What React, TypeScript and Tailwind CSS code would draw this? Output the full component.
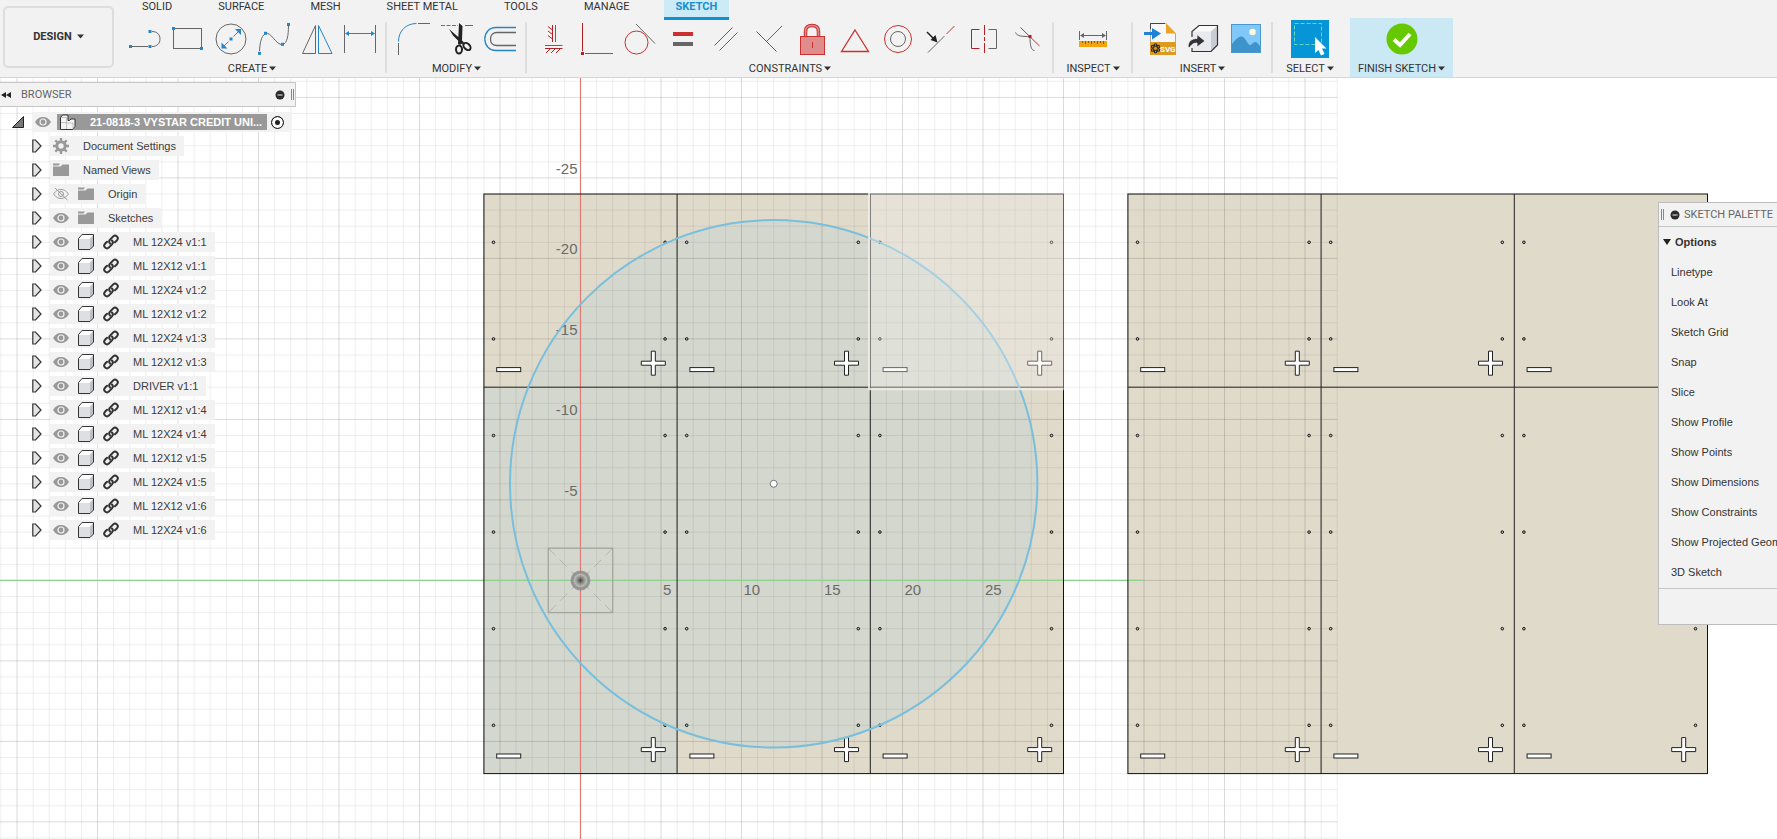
import type { ReactNode } from 'react';

const BLUE = '#2585c9';
const GRAY = '#666666';
const RED = '#c9302f';

// one grid unit in pixels, and the sketch origin inside the viewport
const UNIT = 16.1;
const ORIGIN_X = 580.5;
const ORIGIN_Y = 502.4;

const range = (from: number, to: number) =>
  Array.from({ length: to - from + 1 }, (_, i) => from + i);

interface Tool {
  name: string;
  icon: ReactNode;
}

interface ToolGroup {
  label: string;
  tools: Tool[];
}

function Dot({ x, y, color = BLUE }: { x: number; y: number; color?: string }) {
  return <rect x={x - 1.5} y={y - 1.5} width="3" height="3" fill={color} stroke="none" />;
}

const GROUPS: ToolGroup[] = [
  {
    label: 'CREATE',
    tools: [
      {
        name: 'Line',
        icon: (
          <>
            <path d="M3 23.5H19M23 8.5C28 8.5 31 11.5 31 16S28 23.5 23 23.5" stroke={GRAY} />
            <Dot x={1.5} y={23.5} />
            <Dot x={21} y={23.5} />
            <Dot x={21} y={8.5} />
          </>
        ),
      },
      {
        name: 'Rectangle',
        icon: (
          <>
            <rect x="1.5" y="5.5" width="28" height="20" stroke={GRAY} />
            <Dot x={1.5} y={5.5} />
            <Dot x={29.5} y={25.5} />
          </>
        ),
      },
      {
        name: 'Circle',
        icon: (
          <>
            <circle cx="16" cy="16" r="15" stroke={GRAY} />
            <path d="M8 24l5.5-5.5M18.5 13.5L24 8" stroke={BLUE} />
            <path d="M26 6v6l-6-6zM6.500 25.500v-6l6 6z" fill={BLUE} />
            <Dot x={16} y={16} />
          </>
        ),
      },
      {
        name: 'Spline',
        icon: (
          <>
            <path d="M1.500 28C2 20 3 13.500 7.300 10.500C13 8 18 22.500 24.500 21.500C29.500 20.500 30.300 12 30.500 3" stroke={GRAY} />
            <Dot x={1.5} y={30.3} />
            <Dot x={7.5} y={10.3} />
            <Dot x={24.5} y={21.3} />
            <Dot x={30.5} y={1.5} />
          </>
        ),
      },
      {
        name: 'Mirror',
        icon: (
          <>
            <path d="M14.500 2.500L1.500 30.500H14.500z" stroke={GRAY} />
            <path d="M17.500 2.500L31 30.500H17.500z" stroke={BLUE} />
          </>
        ),
      },
      {
        name: 'Sketch Dimension',
        icon: (
          <>
            <path d="M0.500 2V30M31.500 2V30" stroke={GRAY} />
            <path d="M3 10.500H29" stroke={BLUE} />
            <path d="M1 10.500l4-2.500v5zM31 10.500l-4-2.500v5z" fill={BLUE} />
          </>
        ),
      },
    ],
  },
  {
    label: 'MODIFY',
    tools: [
      {
        name: 'Fillet',
        icon: (
          <>
            <path d="M0.500 18.500C0.500 8 8 0.500 18.500 0.500" stroke={BLUE} />
            <path d="M0.500 20V32M20 0.500H32" stroke={GRAY} />
          </>
        ),
      },
      {
        name: 'Trim',
        icon: (
          <>
            <path d="M0 2.500H17" stroke={BLUE} strokeDasharray="4 1.5" />
            <path d="M24 2.500H32" stroke={GRAY} />
            <path d="M8 6l11 9.500 4 4-2 2-9-9zM18 0l3.500 3-0.500 14-1.500 5-2.500-1z" fill="#222" />
            <ellipse cx="18" cy="26.500" rx="3" ry="4" stroke="#222" strokeWidth="2" />
            <ellipse cx="26" cy="23.500" rx="2.800" ry="4.200" stroke="#222" strokeWidth="2" transform="rotate(-45 26 23.500)" />
          </>
        ),
      },
      {
        name: 'Offset',
        icon: (
          <>
            <path d="M32 4.500H12C5 4.500 0.800 10 0.800 16S5 27.500 12 27.500H32" stroke={BLUE} strokeWidth="1.300" />
            <path d="M32 9.500H13C9 9.500 6.500 12 6.500 16S9 22.500 13 22.500H32" stroke={GRAY} strokeWidth="1.300" />
          </>
        ),
      },
    ],
  },
  {
    label: 'CONSTRAINTS',
    tools: [
      {
        name: 'Horizontal/Vertical',
        icon: (
          <>
            <path d="M14.500 2V19M10 3.500l4.500 3.500M10 8l4.500 3.500M10 12.500l4.500 3.500M7 25.500H24.500M12 26l-4 4M17 26l-4 4M22 26l-4 4" stroke="#b32024" />
            <path d="M17.500 2V19M7 22.500H24.500" stroke={GRAY} />
          </>
        ),
      },
      {
        name: 'Coincident',
        icon: (
          <>
            <path d="M1.500 0V28" stroke="#b32024" />
            <path d="M4 30.500H32" stroke={GRAY} />
            <Dot x={1.5} y={30.5} color="#b32024" />
          </>
        ),
      },
      {
        name: 'Tangent',
        icon: (
          <>
            <circle cx="12.500" cy="19.500" r="11.500" stroke={RED} />
            <path d="M12 1l19 19.500" stroke={GRAY} />
          </>
        ),
      },
      {
        name: 'Equal',
        icon: (
          <>
            <path d="M6 9h20v4H6z" fill={RED} />
            <path d="M6 19h20v4H6z" fill={GRAY} />
          </>
        ),
      },
      {
        name: 'Parallel',
        icon: (
          <>
            <path d="M4.500 22.500L22.500 4.500" stroke={RED} />
            <path d="M9.500 27.500L27.500 9.500" stroke={GRAY} />
          </>
        ),
      },
      {
        name: 'Perpendicular',
        icon: (
          <>
            <path d="M3.500 8.500l20 20" stroke={RED} />
            <path d="M14 18L29 3" stroke={GRAY} />
          </>
        ),
      },
      {
        name: 'Fix/Unfix',
        icon: (
          <>
            <path d="M9.500 13V8.500C9.500 4.500 12 2.500 16 2.500S22.500 4.500 22.500 8.500V13" stroke={RED} strokeWidth="3.500" />
            <path d="M9.500 13V8.500C9.500 4.500 12 2.500 16 2.500S22.500 4.500 22.500 8.500V13" stroke="#e08c8c" strokeWidth="1.500" />
            <rect x="4.500" y="13.500" width="24" height="18" fill="#e08c8c" stroke={RED} />
            <path d="M16.500 19v6" stroke={RED} />
          </>
        ),
      },
      {
        name: 'Midpoint',
        icon: <path d="M16 7L29.500 28.500H2.500z" stroke={RED} strokeWidth="1.300" />,
      },
      {
        name: 'Concentric',
        icon: (
          <>
            <circle cx="16" cy="16" r="13.500" stroke={RED} />
            <circle cx="16" cy="16" r="7.500" stroke={GRAY} />
          </>
        ),
      },
      {
        name: 'Collinear',
        icon: (
          <>
            <path d="M3 29.500L19.500 13" stroke={GRAY} />
            <path d="M21.500 11L29.500 3" stroke={RED} />
            <path d="M2 9l7 7" stroke="#222" strokeWidth="1.500" />
            <path d="M12.500 19.500l-7-2.500 5-5z" fill="#222" />
          </>
        ),
      },
      {
        name: 'Symmetry',
        icon: (
          <>
            <path d="M11.500 6.500H3.500V25.500H11.500" stroke="#b32024" />
            <path d="M16.500 2v10M16.500 14v4M16.500 20v10" stroke="#b32024" />
            <path d="M20.500 6.500H28.500V25.500H20.500" stroke={GRAY} />
          </>
        ),
      },
      {
        name: 'Curvature',
        icon: (
          <>
            <path d="M4.500 9.500C6 13.500 12 13.500 19 13.500C19 22 20 27.500 23.500 27.500" stroke={GRAY} />
            <path d="M9.500 4.500l19 18.500" stroke={RED} />
            <Dot x={19} y={13.5} color="#b32024" />
          </>
        ),
      },
    ],
  },
  {
    label: 'INSPECT',
    tools: [
      {
        name: 'Measure',
        icon: (
          <>
            <path d="M2.500 8v9M29.500 8v9M5 12.500h22" stroke={GRAY} />
            <path d="M3 12.500l4-2.500v5zM29 12.500l-4-2.500v5z" fill={GRAY} />
            <path d="M2 18h28v6H2z" fill="#f5a30a" />
            <path d="M5.500 18v2M8.500 18v3M11.500 18v2M14.500 18v3M17.500 18v2M20.500 18v3M23.500 18v2M26.500 18v3" stroke="#8a5a00" />
          </>
        ),
      },
    ],
  },
  {
    label: 'INSERT',
    tools: [
      {
        name: 'Insert SVG',
        icon: (
          <>
            <path d="M6.500 0.500h15l10 10v21h-25z" fill="#f7f7f7" stroke="#aaa" />
            <path d="M6.500 6V0.500H21" stroke="#444" />
            <path d="M22 0l10 10.500H22z" fill="#eaa42b" />
            <path d="M6 19h26v13H6z" fill="#dc9a1f" />
            <path d="M0 9h8V5l9 5.500-9 6V12H0z" fill="#1c83d6" />
            <g stroke="#222" strokeWidth="1.100">
              <circle cx="11.500" cy="22" r="1.300" />
              <circle cx="11.500" cy="28.500" r="1.300" />
              <circle cx="8.700" cy="23.700" r="1.300" />
              <circle cx="14.300" cy="23.700" r="1.300" />
              <circle cx="8.700" cy="27" r="1.300" />
              <circle cx="14.300" cy="27" r="1.300" />
            </g>
            <text x="16" y="28.500" fill="#fff" fontFamily="Roboto, sans-serif" fontSize="8" fontWeight="700">SVG</text>
          </>
        ),
      },
      {
        name: 'Insert Derive',
        icon: (
          <>
            <path d="M5 8.500L12 2.500H30.500V22L24 28.500H5z" fill="#fafafa" />
            <path d="M24 8.500L30.500 2.500V22L24 28.500z" fill="#c9ccd2" />
            <path d="M5 8.500h19v20H5z" fill="#e9eaee" />
            <path d="M5 14V8.500L12 2.500H30.500V22L24 28.500H5V25" stroke="#333" strokeWidth="1.200" />
            <path d="M1 24C1 18 5 15.500 10 15.500V11.500l8 6.500-8 6v-4C6 20 4 22 3 24.500z" fill="#333" stroke="#f2f2f2" strokeWidth="0.800" />
          </>
        ),
      },
      {
        name: 'Canvas',
        icon: (
          <>
            <rect x="1.500" y="1.500" width="29" height="28" fill="#7fc8f8" stroke="#4a9ad0" />
            <path d="M2 21C7 15 9 13 12 13.500S18 22 20 22S23 19 25 19S28 21 30 23V29H2z" fill="#3f93cb" />
            <circle cx="22.500" cy="9" r="3.200" fill="#fffbe0" />
          </>
        ),
      },
    ],
  },
];

const TABS = ['SOLID', 'SURFACE', 'MESH', 'SHEET METAL', 'TOOLS', 'MANAGE', 'SKETCH'];

const COMPONENTS = [
  'ML 12X24 v1:1',
  'ML 12X12 v1:1',
  'ML 12X24 v1:2',
  'ML 12X12 v1:2',
  'ML 12X24 v1:3',
  'ML 12X12 v1:3',
  'DRIVER v1:1',
  'ML 12X12 v1:4',
  'ML 12X24 v1:4',
  'ML 12X12 v1:5',
  'ML 12X24 v1:5',
  'ML 12X12 v1:6',
  'ML 12X24 v1:6',
];

const PALETTE_OPTIONS = [
  'Linetype',
  'Look At',
  'Sketch Grid',
  'Snap',
  'Slice',
  'Show Profile',
  'Show Points',
  'Show Dimensions',
  'Show Constraints',
  'Show Projected Geom',
  '3D Sketch',
];

function Caret() {
  return (
    <svg className="mb-[2px] h-[5px] w-[7px]" viewBox="0 0 7 5">
      <path d="M0 0.500h7L3.500 4.500z" fill="#333" />
    </svg>
  );
}

function GroupLabel({ children }: { children: string }) {
  return (
    <button className="mx-auto mt-[3px] flex items-center gap-[2px] text-[11px] leading-4 whitespace-nowrap">
      {children}
      <Caret />
    </button>
  );
}

function Toolbar() {
  return (
    <header className="flex h-[78px] shrink-0 border-b border-[#d6d6d6] bg-[#f2f2f2] font-[Roboto,sans-serif] text-[#333]">
      <div className="w-[118px] shrink-0 pt-[6px] pl-[3px]">
        <button className="flex h-[62px] w-[111px] items-center justify-center gap-[5px] rounded-[5px] border-2 border-[#dddddd] text-[11px] font-bold">
          DESIGN
          <Caret />
        </button>
      </div>
      <div className="flex flex-col">
        <nav className="flex h-[18px] gap-[22px] pl-3">
          {TABS.map((tab) => (
            <button
              key={tab}
              className={
                tab === 'SKETCH'
                  ? 'h-[20px] border-b-[3px] border-[#1490cf] bg-[#cdeaf7] px-3 pb-[3px] text-[11px] leading-[14px] font-bold text-[#1490cf]'
                  : 'h-[20px] border-b-[3px] border-transparent px-3 pb-[3px] text-[11px] leading-[14px]'
              }
            >
              {tab}
            </button>
          ))}
        </nav>
        <div className="flex h-[59px]">
          {GROUPS.map((group) => (
            <div key={group.label} className="flex">
              <div className="flex min-w-[77px] flex-col pt-[2px] pr-1 pl-[5px]">
                <div className="flex h-[38px] justify-center">
                  {group.tools.map((tool) => (
                    <button key={tool.name} aria-label={tool.name} className="flex w-[43px] items-center justify-center">
                      <svg className="size-8 overflow-visible" viewBox="0 0 32 32" fill="none">
                        {tool.icon}
                      </svg>
                    </button>
                  ))}
                </div>
                <GroupLabel>{group.label}</GroupLabel>
              </div>
              <div className="mt-1 h-[51px] w-[2px] bg-[#dedede]" />
            </div>
          ))}
          <div className="flex w-[77px] flex-col pt-[2px] pr-[3px]">
            <button aria-label="Select" className="mx-auto size-[38px] bg-[#0696d7]">
              <svg className="size-[38px]" viewBox="0 0 38 38" fill="none">
                <rect x="3.500" y="3.500" width="27" height="21" stroke="#62d8c0" strokeDasharray="4 2" />
                <path d="M24 17v16l3.500-3 2.500 5.500 3.500-1.500-2.500-5.500h4.500z" fill="#fff" />
              </svg>
            </button>
            <GroupLabel>SELECT</GroupLabel>
          </div>
          <div className="flex w-[103px] flex-col bg-[#cbe9f5] pt-[2px]">
            <button aria-label="Finish" className="mx-auto flex h-[38px] items-center">
              <svg className="size-8" viewBox="0 0 32 32" fill="none">
                <circle cx="16" cy="16" r="15.500" fill="#65c800" />
                <path d="M8 16.500l6 5.500L24 11" stroke="#fff" strokeWidth="4" />
              </svg>
            </button>
            <GroupLabel>FINISH SKETCH</GroupLabel>
          </div>
        </div>
      </div>
    </header>
  );
}

function Eye({ hidden }: { hidden?: boolean }) {
  if (hidden) {
    return (
      <svg className="size-4" viewBox="0 0 16 16" fill="none" stroke="#999">
        <path d="M0.500 8C3 4.500 5.500 3.500 8 3.500S13 4.500 15.500 8C13 11.500 10.500 12.500 8 12.500S3 11.500 0.500 8z" />
        <circle cx="8" cy="8" r="2.500" />
        <path d="M2 2l12.500 12" />
      </svg>
    );
  }
  return (
    <svg className="size-4" viewBox="0 0 16 16" fill="none">
      <path d="M0 8C2.500 4 5 3 8 3S13.500 4 16 8C13.500 12 11 13 8 13S2.500 12 0 8z" fill="#999" />
      <circle cx="8" cy="8" r="3" stroke="#f2f2f2" strokeWidth="1.200" />
    </svg>
  );
}

function Folder() {
  return (
    <svg className="size-4" viewBox="0 0 16 16" fill="#999">
      <path d="M0 4.500h7.500l2-2H16V14H0zM0 1.500h7l-1.500 2H0z" />
    </svg>
  );
}

function Gear() {
  return (
    <svg className="size-4" viewBox="0 0 16 16" fill="none" stroke="#999">
      <circle cx="8" cy="8" r="4.200" strokeWidth="3" />
      <path d="M8 0v3M8 13v3M0 8h3M13 8h3M2.300 2.300l2.200 2.200M11.500 11.500l2.200 2.200M2.300 13.700l2.200-2.200M11.500 4.500l2.200-2.200" strokeWidth="2.400" />
    </svg>
  );
}

function Cube() {
  return (
    <svg className="size-4" viewBox="0 0 16 16" fill="none">
      <path d="M0.500 4.500L4 0.500H15.500V12L12 15.500H0.500z" fill="#fff" />
      <path d="M12 4.500l3.500-4V12L12 15.500z" fill="#bcbfc5" />
      <path d="M1 5h11v10H1z" fill="#dedfe3" />
      <path d="M0.500 4.500L4 0.500H15.500V12L12 15.500H0.500z" stroke="#333" />
    </svg>
  );
}

function Link() {
  return (
    <svg className="size-4" viewBox="0 0 16 16" fill="none" stroke="#333" strokeWidth="2" strokeLinecap="round">
      <path d="M7 9.500C5.700 8 6 6.700 7 5.700L10.200 2.400C12.500 0.300 16.500 3.200 14 6.200L12 8.200" />
      <path d="M9 6.500C10.300 8 10 9.300 9 10.300L5.800 13.600C3.500 15.700 -0.500 12.800 2 9.800L4 7.800" />
    </svg>
  );
}

function MinusDisc() {
  return (
    <svg className="size-[10px]" viewBox="0 0 10 10">
      <circle cx="5" cy="5" r="4.500" fill="#2b2b2b" />
      <path d="M2.500 4.500h5v1h-5z" fill="#f2f2f2" />
    </svg>
  );
}

function Grip() {
  return <span className="h-[11px] w-[3px] border-x border-[#888]" />;
}

function TreeRow({ label, children }: { label: string; children: ReactNode }) {
  return (
    <li className="flex h-5 items-center">
      <button aria-label={`Expand ${label}`} className="flex w-[18px] shrink-0">
        <svg className="h-[14px] w-[10px]" viewBox="0 0 10 14">
          <path d="M0.800 1L3.500 1L9 7L3.500 13L0.800 13z" fill="#e4e4e4" stroke="#333" strokeWidth="1.200" />
        </svg>
      </button>
      <div className="flex h-5 items-center gap-[9px] bg-[#f2f2f2] pr-2 pl-[3px]">
        {children}
        <span className="pl-[5px] whitespace-nowrap">{label}</span>
      </div>
    </li>
  );
}

function Browser() {
  return (
    <aside className="relative w-[296px] pt-1 text-[11px] text-[#3c3c3c]">
      <div className="flex h-[25px] items-center gap-[10px] border border-l-0 border-[#c6c6c6] bg-[#f2f2f2] pr-[1px] pl-[1px] font-[Roboto,sans-serif] text-[#666]">
        <button aria-label="Collapse browser">
          <svg className="h-[6px] w-[10px]" viewBox="0 0 10 6">
            <path d="M5 0v6L0 3zM10 0v6L5 3z" fill="#222" />
          </svg>
        </button>
        <h2 className="pt-px">BROWSER</h2>
        <button aria-label="Minimize browser" className="ml-auto">
          <MinusDisc />
        </button>
        <span className="-ml-1 flex">
          <Grip />
        </span>
      </div>

      <div className="mt-[5px] flex h-5 items-center pl-3">
        <button aria-label="Collapse document" className="w-5">
          <svg className="size-3" viewBox="0 0 12 12">
            <path d="M11.500 0.500v11H0.500z" fill="#777" stroke="#222" />
          </svg>
        </button>
        <div className="flex h-5 items-center bg-[#f2f2f2] pr-2 pl-[3px]">
          <Eye />
          <div className="ml-[6px] flex h-4 w-[210px] items-center bg-[#999] pl-[2px] font-bold text-white">
            <svg className="h-4 w-[17px] shrink-0" viewBox="0 0 17 16" fill="#f4f4f4">
              <path d="M1.500 3.500l2-2.500h5.500v5.500h1.500l1.500-1.500h4v7.500l-2.500 3h-12z" stroke="#333" />
              <path d="M2 8.500h5.500M2 3.500h5.500V15M7.500 9h6.500v6" fill="none" stroke="#aaa" strokeWidth="0.700" />
            </svg>
            <span className="ml-[14px] whitespace-nowrap">21-0818-3 VYSTAR CREDIT UNI...</span>
          </div>
          <label className="ml-1 flex">
            <input
              type="radio"
              name="active-component"
              aria-label="Activate component"
              defaultChecked
              className="size-[13px] appearance-none rounded-full border border-[#222] bg-[#222] shadow-[inset_0_0_0_3px_white]"
            />
          </label>
        </div>
      </div>

      <ul className="mt-1 flex flex-col gap-1 pl-8">
        <TreeRow label="Document Settings">
          <Gear />
        </TreeRow>
        <TreeRow label="Named Views">
          <Folder />
        </TreeRow>
        <TreeRow label="Origin">
          <Eye hidden />
          <Folder />
        </TreeRow>
        <TreeRow label="Sketches">
          <Eye />
          <Folder />
        </TreeRow>
        {COMPONENTS.map((name) => (
          <TreeRow key={name} label={name}>
            <Eye />
            <Cube />
            <Link />
          </TreeRow>
        ))}
      </ul>
    </aside>
  );
}

function SketchPalette() {
  return (
    <aside className="relative mt-[124px] w-[119px] overflow-hidden border border-r-0 border-[#bdbdbd] bg-[#f2f2f2] text-[11px] whitespace-nowrap text-[#333]">
      <div className="flex h-6 items-center gap-1 border-b border-[#c6c6c6] pl-[2px] font-[Roboto,sans-serif] text-[#666]">
        <Grip />
        <button aria-label="Minimize palette" className="ml-[2px]">
          <MinusDisc />
        </button>
        <h2 className="pt-px">SKETCH PALETTE</h2>
      </div>
      <button className="flex h-[30px] items-center gap-1 pl-1 font-bold">
        <svg className="h-[6px] w-2" viewBox="0 0 8 6">
          <path d="M0 0h8L4 6z" fill="#222" />
        </svg>
        Options
      </button>
      <ul className="pl-3">
        {PALETTE_OPTIONS.map((option) => (
          <li key={option} className="h-[30px] leading-[30px]">
            {option}
          </li>
        ))}
      </ul>
      <div className="mt-px h-9 border-t border-[#c6c6c6]" />
    </aside>
  );
}

function Minus({ x, y }: { x: number; y: number }) {
  return <rect x={x - 12} y={y - 2} width="24" height="4" fill="#fff" stroke="#222" />;
}

function Plus({ x, y }: { x: number; y: number }) {
  return (
    <path
      transform={`translate(${x} ${y})`}
      d="M-2 -12H2V-2H12V2H2V12H-2V2H-12V-2H-2z"
      fill="#fff"
      stroke="#222"
    />
  );
}

// three columns wide: a 12x12 module on top of a 12x24 one
function Cabinet({ left }: { left: number }) {
  const x0 = left * UNIT;
  const w = 12 * UNIT;
  return (
    <g>
      <rect x={x0} y={-2 * w} width={3 * w} height={3 * w} fill="none" stroke="#111" />
      <path d={`M${x0} ${-w}h${3 * w}M${x0 + w} ${-2 * w}v${3 * w}M${x0 + 2 * w} ${-2 * w}v${3 * w}`} stroke="#222" />
      {[0, 1, 2].map((col) => {
        const x = x0 + col * w;
        return (
          <g key={col}>
            {[-21, -15, -9, -3, 3, 9].map((row) => (
              <g key={row} fill="#bbb" stroke="#111">
                <circle cx={x + 9.6} cy={row * UNIT} r="1.300" />
                <circle cx={x + w - 12} cy={row * UNIT} r="1.300" />
              </g>
            ))}
            {[-12, 12].map((bottom) => (
              <g key={bottom}>
                <Minus x={x + 24.8} y={bottom * UNIT - 17.6} />
                <Plus x={x + w - 23.8} y={bottom * UNIT - 24} />
              </g>
            ))}
          </g>
        );
      })}
    </g>
  );
}

function Canvas() {
  return (
    <svg className="absolute inset-0 size-full" fontFamily="'Liberation Sans', sans-serif">
      <defs>
        <radialGradient id="origin-ball">
          <stop offset="0" stopColor="#333" />
          <stop offset="0.35" stopColor="#888" />
          <stop offset="0.6" stopColor="#b5b8b0" />
          <stop offset="0.75" stopColor="#888" />
          <stop offset="1" stopColor="#8c8f88" />
        </radialGradient>
      </defs>
      <g transform={`translate(${ORIGIN_X} ${ORIGIN_Y})`}>
        <g fill="#e0dacb">
          <rect x={-6 * UNIT} y={-24 * UNIT} width={36 * UNIT} height={36 * UNIT} />
          <rect x={34 * UNIT} y={-24 * UNIT} width={36 * UNIT} height={36 * UNIT} />
        </g>
        <g fill="#d4d7cd">
          <rect x={-6 * UNIT} y={-12 * UNIT} width={12 * UNIT} height={24 * UNIT} />
          <circle cx={12 * UNIT} cy={-6 * UNIT} r="263.700" />
        </g>

        <g stroke="#000">
          {range(-36, 47).map((i) => (
            <path key={i} d={`M${i * UNIT} -600V600`} strokeOpacity={i % 5 === 0 ? 0.14 : 0.065} />
          ))}
          {range(-31, 21).map((i) => (
            <path key={i} d={`M-600 ${i * UNIT}H${47 * UNIT}`} strokeOpacity={i % 5 === 0 ? 0.14 : 0.065} />
          ))}
        </g>

        <path d={`M-600 0H${35 * UNIT}`} stroke="#8fd08f" strokeWidth="1.200" />
        <path d="M0 -600V600" stroke="#dc7b74" strokeWidth="1.200" />

        <g fill="#6b6b67" fontSize="15">
          {[25, 20, 15, 10, 5].map((n) => (
            <text key={n} x="-3" y={-n * UNIT - 4} textAnchor="end">
              -{n}
            </text>
          ))}
          {[5, 10, 15, 20, 25].map((n) => (
            <text key={n} x={n * UNIT + 2} y="15">
              {n}
            </text>
          ))}
        </g>

        <g fill="none" stroke="#a3a79e">
          <rect x={-2 * UNIT} y={-2 * UNIT} width={4 * UNIT} height={4 * UNIT} strokeWidth="1.300" />
          <path d="M-32 -32L32 32M32 -32L-32 32" strokeDasharray="10 6" strokeWidth="0.700" />
        </g>
        <circle r="10" fill="url(#origin-ball)" fillOpacity="0.85" />

        <Cabinet left={-6} />
        <Cabinet left={34} />

        <circle cx={12 * UNIT} cy={-6 * UNIT} r="263.700" fill="none" stroke="#78bfdd" strokeWidth="2" />
        <circle cx={12 * UNIT} cy={-6 * UNIT} r="3.500" fill="#fff" stroke="#777" />

        <rect x="288" y={-24 * UNIT - 1} width={30 * UNIT - 287} height={12 * UNIT + 3} fill="#f4f2ee" fillOpacity="0.35" />
        <path d={`M288.500 ${-24 * UNIT - 1}V${-12 * UNIT + 2}H${30 * UNIT}`} fill="none" stroke="#f1efe9" strokeWidth="2" strokeOpacity="0.8" />
      </g>
    </svg>
  );
}

export default function App() {
  return (
    <div className="flex h-screen flex-col overflow-hidden bg-white font-['Liberation_Sans',sans-serif]">
      <Toolbar />
      <main className="relative flex flex-1 items-start justify-between overflow-hidden">
        <Canvas />
        <Browser />
        <SketchPalette />
      </main>
    </div>
  );
}
